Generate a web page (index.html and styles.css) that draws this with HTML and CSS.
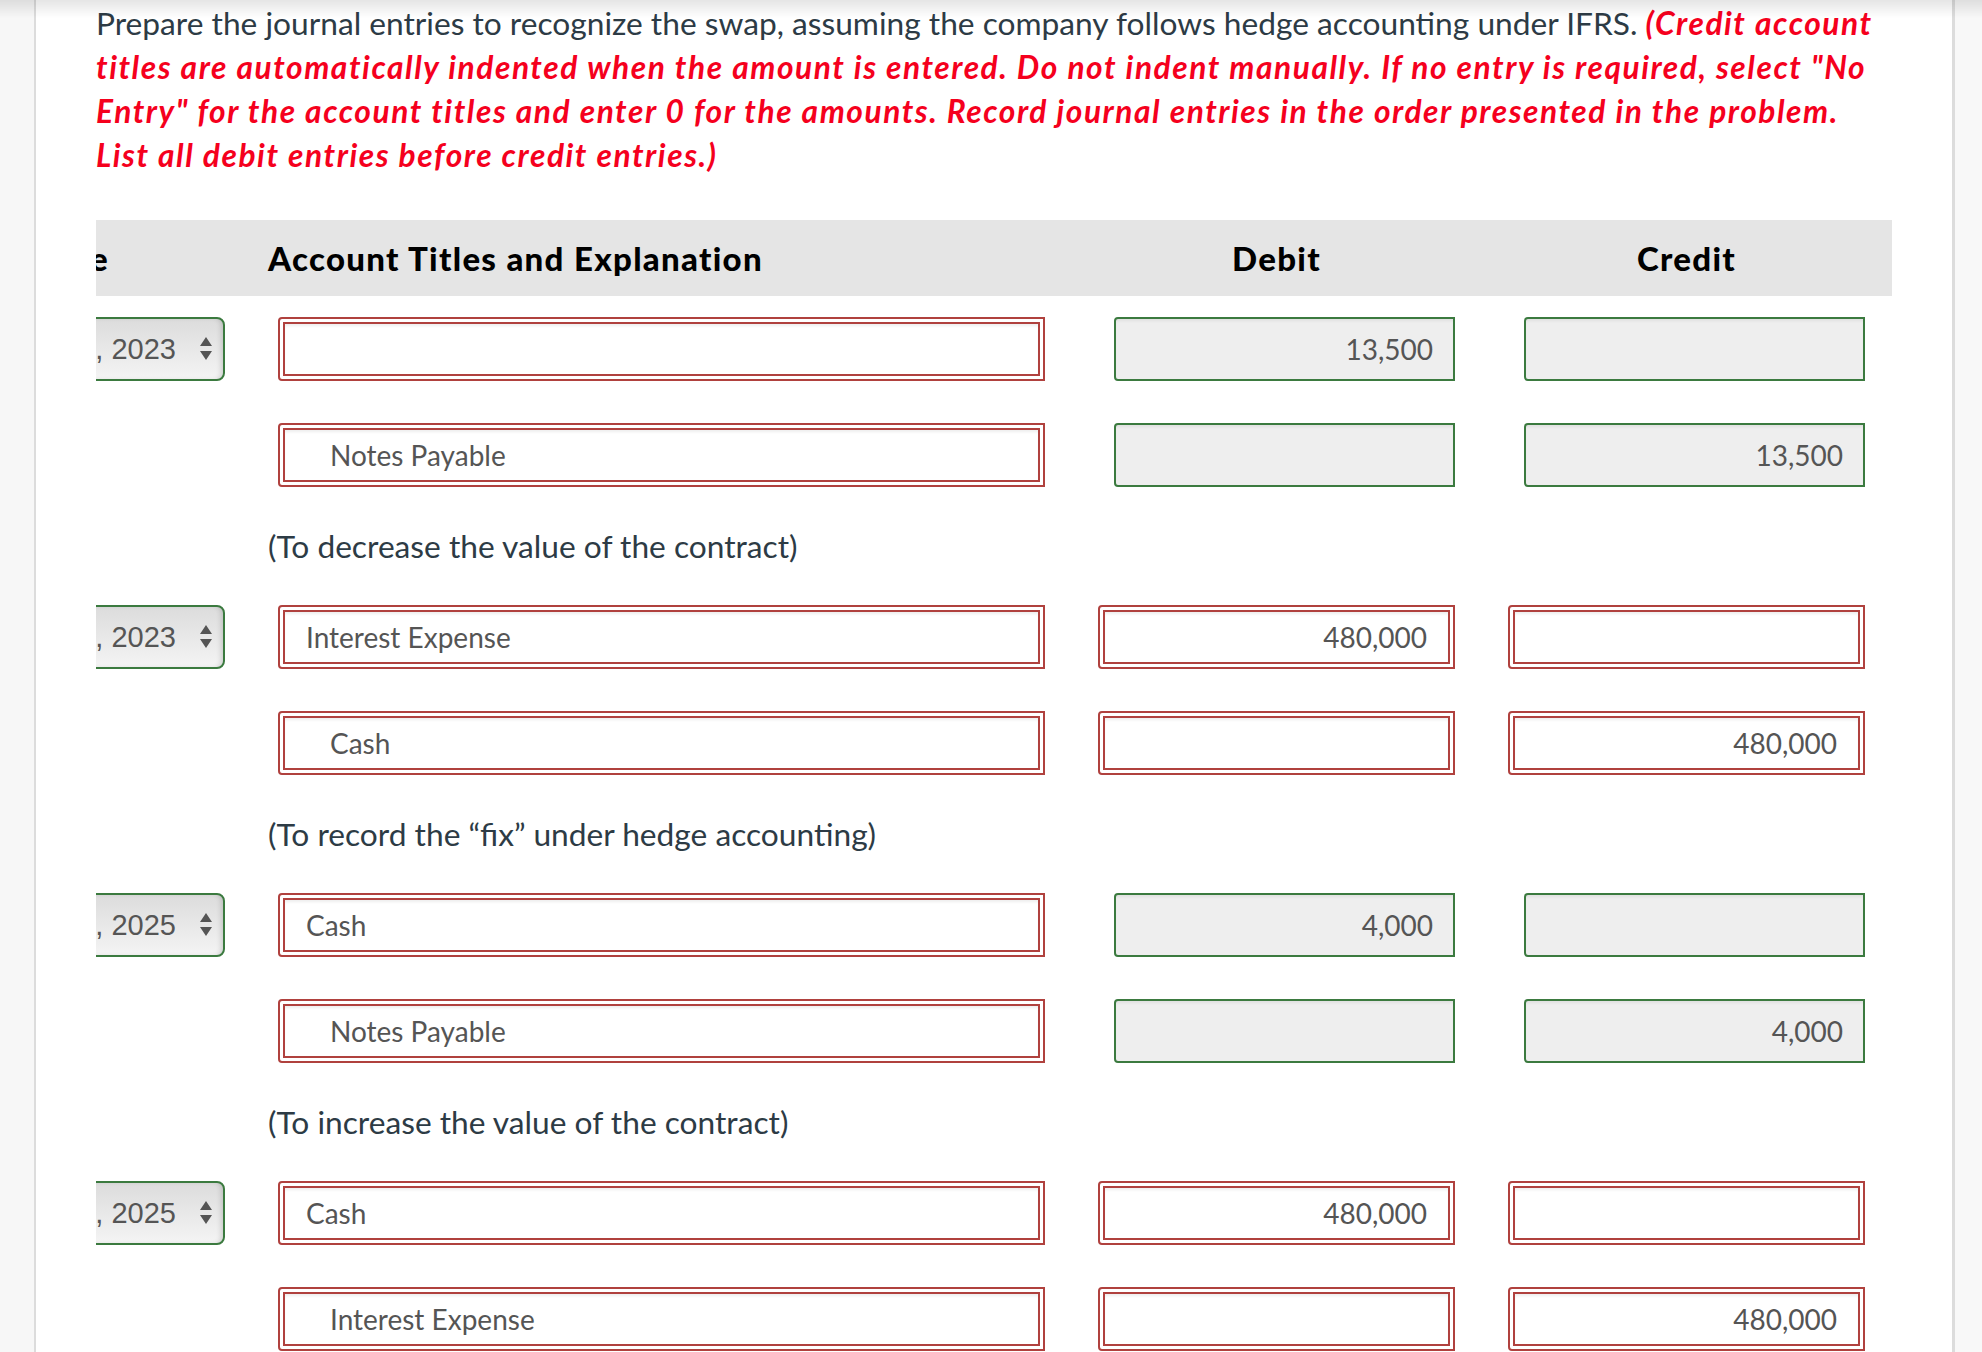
FILE: index.html
```html
<!DOCTYPE html>
<html lang="en">
<head>
<meta charset="utf-8">
<title>Journal entries</title>
<link rel="stylesheet" href="styles.css">
</head>
<body>
<div class="page">
  <aside class="side-left"></aside>
  <main class="main">
    <p class="prompt">Prepare the journal entries to recognize the swap, assuming the company follows hedge accounting under IFRS. <em class="note">(Credit account titles are automatically indented when the amount is entered. Do not indent manually. If no entry is required, select "No Entry" for the account titles and enter 0 for the amounts. Record journal entries in the order presented in the problem. List all debit entries before credit entries.)</em></p>

    <div class="journal">
      <div class="journal-inner">
        <div class="jgrid jhead">
          <div class="h-date">Date</div>
          <div class="h-acct">Account Titles and Explanation</div>
          <div class="h-debit">Debit</div>
          <div class="h-credit">Credit</div>
        </div>

        <!-- Entry 1 -->
        <div class="jgrid jrow">
          <div class="cell-date"><div class="select"><span>Dec. 31, 2023</span><svg class="spin" width="12" height="24" viewBox="0 0 12 24"><path d="M6 0 L12 9 H0Z M0 14 H12 L6 23Z"/></svg></div></div>
          <div class="cell-acct"><div class="field-red"><div class="inner"></div></div></div>
          <div class="cell-amt debit"><div class="field-green">13,500</div></div>
          <div class="cell-amt credit"><div class="field-green"></div></div>
        </div>
        <div class="jgrid jrow">
          <div class="cell-date"></div>
          <div class="cell-acct"><div class="field-red"><div class="inner indent">Notes Payable</div></div></div>
          <div class="cell-amt debit"><div class="field-green"></div></div>
          <div class="cell-amt credit"><div class="field-green">13,500</div></div>
        </div>
        <div class="jgrid jexp">
          <div></div>
          <div class="exp-text">(To decrease the value of the contract)</div>
        </div>

        <!-- Entry 2 -->
        <div class="jgrid jrow">
          <div class="cell-date"><div class="select"><span>Dec. 31, 2023</span><svg class="spin" width="12" height="24" viewBox="0 0 12 24"><path d="M6 0 L12 9 H0Z M0 14 H12 L6 23Z"/></svg></div></div>
          <div class="cell-acct"><div class="field-red"><div class="inner">Interest Expense</div></div></div>
          <div class="cell-amt debit"><div class="field-red amt"><div class="inner">480,000</div></div></div>
          <div class="cell-amt credit"><div class="field-red amt"><div class="inner"></div></div></div>
        </div>
        <div class="jgrid jrow">
          <div class="cell-date"></div>
          <div class="cell-acct"><div class="field-red"><div class="inner indent">Cash</div></div></div>
          <div class="cell-amt debit"><div class="field-red amt"><div class="inner"></div></div></div>
          <div class="cell-amt credit"><div class="field-red amt"><div class="inner">480,000</div></div></div>
        </div>
        <div class="jgrid jexp">
          <div></div>
          <div class="exp-text">(To record the “fix” under hedge accounting)</div>
        </div>

        <!-- Entry 3 -->
        <div class="jgrid jrow">
          <div class="cell-date"><div class="select"><span>Dec. 31, 2025</span><svg class="spin" width="12" height="24" viewBox="0 0 12 24"><path d="M6 0 L12 9 H0Z M0 14 H12 L6 23Z"/></svg></div></div>
          <div class="cell-acct"><div class="field-red"><div class="inner">Cash</div></div></div>
          <div class="cell-amt debit"><div class="field-green">4,000</div></div>
          <div class="cell-amt credit"><div class="field-green"></div></div>
        </div>
        <div class="jgrid jrow">
          <div class="cell-date"></div>
          <div class="cell-acct"><div class="field-red"><div class="inner indent">Notes Payable</div></div></div>
          <div class="cell-amt debit"><div class="field-green"></div></div>
          <div class="cell-amt credit"><div class="field-green">4,000</div></div>
        </div>
        <div class="jgrid jexp">
          <div></div>
          <div class="exp-text">(To increase the value of the contract)</div>
        </div>

        <!-- Entry 4 -->
        <div class="jgrid jrow">
          <div class="cell-date"><div class="select"><span>Dec. 31, 2025</span><svg class="spin" width="12" height="24" viewBox="0 0 12 24"><path d="M6 0 L12 9 H0Z M0 14 H12 L6 23Z"/></svg></div></div>
          <div class="cell-acct"><div class="field-red"><div class="inner">Cash</div></div></div>
          <div class="cell-amt debit"><div class="field-red amt"><div class="inner">480,000</div></div></div>
          <div class="cell-amt credit"><div class="field-red amt"><div class="inner"></div></div></div>
        </div>
        <div class="jgrid jrow">
          <div class="cell-date"></div>
          <div class="cell-acct"><div class="field-red"><div class="inner indent">Interest Expense</div></div></div>
          <div class="cell-amt debit"><div class="field-red amt"><div class="inner"></div></div></div>
          <div class="cell-amt credit"><div class="field-red amt"><div class="inner">480,000</div></div></div>
        </div>
      </div>
    </div>
  </main>
  <aside class="side-right"></aside>
</div>
<div class="top-shadow"></div>
</body>
</html>
```

FILE: styles.css
```css
html, body {
  margin: 0;
  padding: 0;
}
body {
  font-family: Lato, "Open Sans", sans-serif;
  height: 1352px;
  overflow: hidden;
  background: #fff;
}
.page {
  display: flex;
  height: 1352px;
}
.side-left {
  flex: none;
  width: 34px;
  background: #f7f7f7;
  border-right: 2px solid #dcdcdc;
}
.side-right {
  flex: none;
  width: 27px;
  background: #f8f8f8;
  border-left: 3px solid #dcdcdc;
}
.main {
  flex: 1;
  min-width: 0;
  padding: 1px 60px 0 60px;
  overflow: hidden;
}
.top-shadow {
  position: fixed;
  top: 0;
  left: 0;
  right: 0;
  height: 18px;
  background: linear-gradient(rgba(0,0,0,0.1), rgba(0,0,0,0));
  pointer-events: none;
}
.prompt {
  margin: 0;
  font-size: 31.7px;
  line-height: 44px;
  color: #2d3b45;
}
.note {
  color: #f5001d;
  font-weight: 700;
  font-style: italic;
  letter-spacing: 1.55px;
}
.journal {
  margin-top: 43px;
  overflow: hidden;
}
.journal-inner {
  margin-left: -110px;
  width: 1906px;
}
.jgrid {
  display: grid;
  grid-template-columns: 282px 830px 410px 384px;
  align-items: center;
}
.jhead {
  height: 76px;
  background: #e5e5e5;
  font-weight: 900;
  font-size: 33px;
  letter-spacing: 1.3px;
  color: #000;
}
.h-date {
  text-align: right;
  padding-right: 159px;
}
.h-debit {
  text-align: center;
  padding-right: 53px;
}
.h-credit {
  text-align: center;
  padding-right: 27px;
}
.jrow {
  padding: 21px 0;
}
.jexp {
  height: 76px;
}
.exp-text {
  font-size: 31.7px;
  color: #2d3b45;
}
.cell-date {
  display: flex;
  justify-content: flex-end;
  padding-right: 43px;
}
.cell-acct {
  padding-left: 10px;
  padding-right: 53px;
}
.cell-amt {
  display: flex;
  justify-content: flex-end;
}
.cell-amt.debit {
  padding-right: 53px;
}
.cell-amt.credit {
  padding-right: 27px;
}
.select {
  box-sizing: border-box;
  width: 230px;
  height: 64px;
  border: 2px solid #3b7a3f;
  border-radius: 8px;
  background: linear-gradient(#dcdcdc, #f4f4f4);
  box-shadow: inset -4px 0 5px -2px rgba(0,0,0,0.15);
  display: flex;
  align-items: center;
  justify-content: flex-end;
  padding-right: 11px;
  font-family: "Liberation Sans", Arial, sans-serif;
  font-size: 29px;
  color: #555;
  white-space: nowrap;
}
.spin {
  flex: none;
  margin-left: 24px;
  fill: #555;
}
.field-red {
  box-sizing: border-box;
  height: 64px;
  border: 2px solid #b0413e;
  border-radius: 4px 0 0 4px;
  padding: 3px;
  background: #fff;
}
.field-red.amt {
  width: 357px;
}
.field-red .inner {
  box-sizing: border-box;
  height: 100%;
  border: 2px solid #b0413e;
  box-shadow: inset 0 3px 3px -1px rgba(0,0,0,0.07);
  display: flex;
  align-items: center;
  padding-left: 21px;
  font-size: 28px;
  color: #555;
}
.field-red .inner.indent {
  padding-left: 45px;
}
.field-red.amt .inner {
  justify-content: flex-end;
  padding-left: 0;
  padding-right: 21px;
}
.field-green {
  box-sizing: border-box;
  width: 341px;
  height: 64px;
  border: 2px solid #3b7a3f;
  border-radius: 4px 0 0 4px;
  background: #eeeeee;
  box-shadow: inset 0 3px 3px -1px rgba(0,0,0,0.06);
  display: flex;
  align-items: center;
  justify-content: flex-end;
  padding-right: 20px;
  font-size: 28px;
  color: #555;
}
```
